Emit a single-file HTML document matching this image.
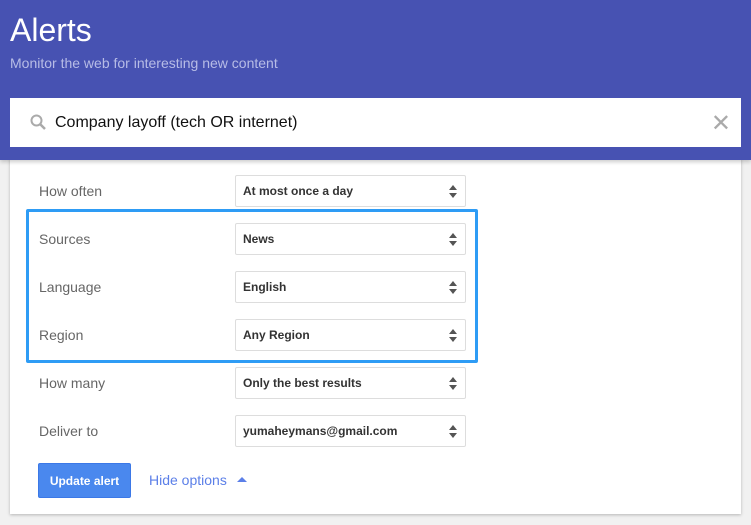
<!DOCTYPE html>
<html><head><style>
body{margin:0;width:751px;height:525px;background:#f1f1f1;font-family:"Liberation Sans",sans-serif;position:relative;overflow:hidden}
.hdr{position:absolute;left:0;top:0;width:751px;height:160px;background:#4752b2;box-shadow:0 2px 4px rgba(0,0,0,.2);z-index:1}
.t{position:absolute;left:10px;top:12px;color:#fff;font-size:32px}
.s{position:absolute;left:10px;top:55px;color:#b7bce6;font-size:14px}
.card{position:absolute;left:10px;top:158px;width:731px;height:356px;background:#fff;box-shadow:0 1px 3px rgba(0,0,0,.25)}
.search{position:absolute;left:10px;top:98px;width:731px;height:49px;background:#fff;z-index:2}
.q{position:absolute;left:45px;top:16px;font-size:16px;color:#111}
.x{position:absolute;right:10px;top:11px;font-size:24px;color:#aaa}
.lab{position:absolute;left:39px;font-size:14px;color:#666}
.sel{position:absolute;left:235px;border:1px solid #ddd;border-radius:2px;background:#fff;font-size:12px;font-weight:bold;color:#333;line-height:30px;padding-left:7px;box-sizing:border-box;width:231px;height:32px}
.sel:after{content:"";position:absolute;right:8px;top:9px;border:4px solid transparent;border-bottom:5px solid #555;border-top:0}
.sel:before{content:"";position:absolute;right:8px;top:17px;border:4px solid transparent;border-top:5px solid #555;border-bottom:0}
.box{position:absolute;left:26px;top:209px;width:446px;height:148px;border:3px solid #2e9cf5;border-radius:2px}
.btn{position:absolute;left:38px;top:463px;width:93px;height:35px;background:#4a88ee;border:1px solid #3b78e7;box-sizing:border-box;color:#fff;font-size:12px;font-weight:bold;text-align:center;line-height:35px;border-radius:2px}
.hide{position:absolute;left:149px;top:472px;color:#5b7fe8;font-size:14px}
</style></head><body>
<div class="hdr"><div class="t">Alerts</div><div class="s">Monitor the web for interesting new content</div></div>
<div class="card"></div>
<div class="search">
<svg style="position:absolute;left:20px;top:16px" width="17" height="17" viewBox="0 0 17 17"><circle cx="6.5" cy="6.5" r="5" fill="none" stroke="#aaa" stroke-width="2"/><path d="M10 10l5 5" stroke="#aaa" stroke-width="2.5"/></svg>
<div class="q">Company layoff (tech OR internet)</div><div class="x">✕</div></div>
<div class="lab" style="top:183px">How often</div><div class="sel" style="top:175px">At most once a day</div>
<div class="lab" style="top:231px">Sources</div><div class="sel" style="top:223px">News</div>
<div class="lab" style="top:279px">Language</div><div class="sel" style="top:271px">English</div>
<div class="lab" style="top:327px">Region</div><div class="sel" style="top:319px">Any Region</div>
<div class="lab" style="top:375px">How many</div><div class="sel" style="top:367px">Only the best results</div>
<div class="lab" style="top:423px">Deliver to</div><div class="sel" style="top:415px">yumaheymans@gmail.com</div>
<div class="box"></div>
<div class="btn">Update alert</div>
<div class="hide">Hide options <span style="display:inline-block;margin-left:6px;border:5px solid transparent;border-bottom:5px solid #5b7fe8;border-top:0;vertical-align:3px"></span></div>
</body></html>
